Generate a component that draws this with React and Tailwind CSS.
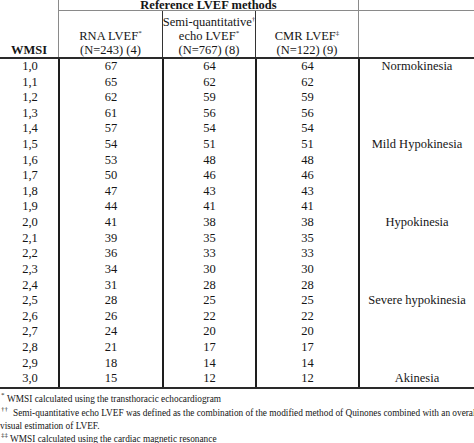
const rows = [
  ["1,0", 67, 64, 64, "Normokinesia"],
  ["1,1", 65, 62, 62],
  ["1,2", 62, 59, 59],
  ["1,3", 61, 56, 56],
  ["1,4", 57, 54, 54],
  ["1,5", 54, 51, 51, "Mild Hypokinesia"],
  ["1,6", 53, 48, 48],
  ["1,7", 50, 46, 46],
  ["1,8", 47, 43, 43],
  ["1,9", 44, 41, 41],
  ["2,0", 41, 38, 38, "Hypokinesia"],
  ["2,1", 39, 35, 35],
  ["2,2", 36, 33, 33],
  ["2,3", 34, 30, 30],
  ["2,4", 31, 28, 28],
  ["2,5", 28, 25, 25, "Severe hypokinesia"],
  ["2,6", 26, 22, 22],
  ["2,7", 24, 20, 20],
  ["2,8", 21, 17, 17],
  ["2,9", 18, 14, 14],
  ["3,0", 15, 12, 12, "Akinesia"],
];

const cols = "grid grid-cols-[58px_104px_93px_103px_1fr]";

function Mark({ children }) {
  return <span className="relative -top-[5px] text-[7px] leading-none">{children}</span>;
}

export default function App() {
  return (
    <div className="h-[443px] w-[474px] overflow-hidden bg-white font-[family-name:'Liberation_Serif','Times_New_Roman',serif] text-[12.5px] text-[#151515]">
      {/* header: group title */}
      <div className={`${cols} h-[11px]`}>
        <div />
        <div className="col-span-3 border-b border-l border-[#8a8a8a] text-center font-bold leading-[10px]">
          Reference LVEF methods
        </div>
        <div className="border-b border-l border-[#8a8a8a]" />
      </div>

      {/* header: column names */}
      <div className={`${cols} h-[48px] border-b-2 border-[#2a2a2a] leading-[14px]`}>
        <div className="flex items-end justify-center font-bold">WMSI</div>
        <div className="flex flex-col items-center justify-end border-l border-[#8a8a8a] text-center">
          <span>RNA LVEF<Mark>*</Mark></span>
          <span>(N=243) (4)</span>
        </div>
        <div className="flex flex-col items-center justify-end border-l border-[#333] text-center">
          <span className="whitespace-nowrap">Semi-quantitative<Mark>†</Mark></span>
          <span>echo LVEF<Mark>*</Mark></span>
          <span>(N=767) (8)</span>
        </div>
        <div className="flex flex-col items-center justify-end border-l border-[#333] text-center">
          <span>CMR LVEF<Mark>‡</Mark></span>
          <span>(N=122) (9)</span>
        </div>
        <div className="border-l border-[#8a8a8a]" />
      </div>

      {/* data */}
      <div className="border-b-2 border-[#2a2a2a]">
        {rows.map(([wmsi, rna, semi, cmr, label]) => (
          <div key={wmsi} className={`${cols} h-[15.62px] leading-[15.62px]`}>
            <div className="pl-[2px] text-center">{wmsi}</div>
            <div className="border-l-2 border-[#1e1e1e] text-center">{rna}</div>
            <div className="border-l-2 border-[#1e1e1e] text-center">{semi}</div>
            <div className="border-l-2 border-[#1e1e1e] text-center">{cmr}</div>
            <div className="whitespace-nowrap border-l-2 border-[#1e1e1e] text-center">{label}</div>
          </div>
        ))}
      </div>

      {/* footnotes */}
      <div className="mt-[4.5px] whitespace-nowrap text-[9.3px] leading-[13.3px]">
        <div>
          <span className="inline-block w-[7px] pl-[1px]"><Mark>*</Mark></span>
          WMSI calculated using the transthoracic echocardiogram
        </div>
        <div>
          <span className="inline-block w-[13px] pl-[1px]"><Mark>††</Mark></span>
          Semi-quantitative echo LVEF was defined as the combination of the modified method of Quinones combined with an overall
        </div>
        <div>visual estimation of LVEF.</div>
        <div>
          <span className="inline-block w-[10px] pl-[1px]"><Mark>‡‡</Mark></span>
          WMSI calculated using the cardiac magnetic resonance
        </div>
      </div>
    </div>
  );
}
